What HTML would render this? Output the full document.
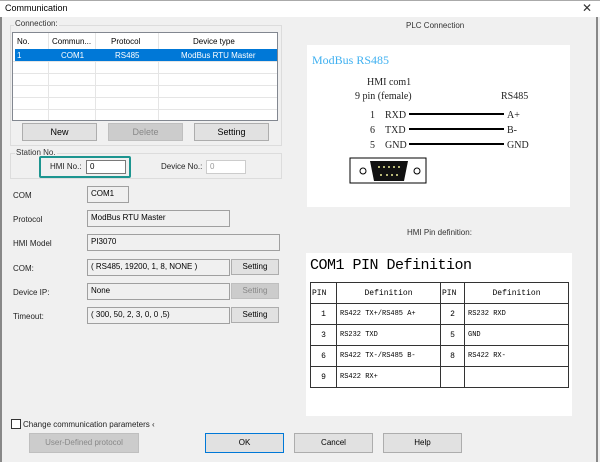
<!DOCTYPE html>
<html><head><meta charset="utf-8"><style>
*{margin:0;padding:0;box-sizing:border-box}
body{width:600px;height:462px;background:#f0f0f0;font-family:"Liberation Sans",sans-serif;font-size:8px;color:#000;position:relative;overflow:hidden}
.a{position:absolute}
.title{left:0;top:0;width:600px;height:17px;background:#fff;border-top:1px solid #aaa}
.btn{position:absolute;background:#e1e1e1;border:1px solid #adadad;text-align:center;font-size:8px}
.dis{background:#ccc;color:#888;border-color:#bfbfbf}
.fld{position:absolute;background:#f0f0f0;border:1px solid #a0a0a0;padding:2px 3px;font-size:8px;height:17px}
.lbl{position:absolute;font-size:8px;color:#222}
.grp{position:absolute;border:1px solid #dcdcdc}
.mono{font-family:"Liberation Mono",monospace}
table{border-collapse:collapse}
td{border:1px solid #333;font-family:"Liberation Mono",monospace;font-size:7px;padding:0 3px;height:21px}
</style></head><body>
<div class="a title"></div>
<div class="a" style="left:5px;top:3px;font-size:9px">Communication</div>
<div class="a" style="left:582px;top:1px;font-size:12px;color:#333">✕</div>
<div class="a" style="left:0;top:17px;width:2px;height:445px;background:#888"></div>
<div class="a" style="left:596px;top:17px;width:2px;height:445px;background:#888"></div>

<div class="grp" style="left:10px;top:25px;width:272px;height:121px"></div>
<div class="a" style="left:14px;top:19px;background:#f0f0f0;padding:0 1px;font-size:8px;color:#333">Connection:</div>
<div class="a" style="left:12px;top:32px;width:266px;height:89px;background:#fff;border:1px solid #828790"></div>
<svg class="a" style="left:13px;top:33px" width="264" height="87">
<g stroke="#e5e5e5" stroke-width="1"><line x1="35.5" y1="0" x2="35.5" y2="87"/><line x1="82.5" y1="0" x2="82.5" y2="87"/><line x1="145.5" y1="0" x2="145.5" y2="87"/>
<line x1="0" y1="28.5" x2="264" y2="28.5"/><line x1="0" y1="40.5" x2="264" y2="40.5"/><line x1="0" y1="52.5" x2="264" y2="52.5"/><line x1="0" y1="64.5" x2="264" y2="64.5"/><line x1="0" y1="76.5" x2="264" y2="76.5"/></g>
<rect x="2" y="16" width="262" height="12" fill="#0078d7"/>
<g font-family="Liberation Sans" font-size="8"><text x="4" y="11">No.</text><text x="39" y="11">Commun...</text><text x="98" y="11">Protocol</text><text x="180" y="11">Device type</text>
<g fill="#fff"><text x="4" y="25">1</text><text x="48" y="25">COM1</text><text x="102" y="25">RS485</text><text x="168" y="25">ModBus RTU Master</text></g></g></svg>
<div class="btn" style="left:22px;top:123px;width:75px;height:18px;line-height:16px;font-size:9px">New</div>
<div class="btn dis" style="left:108px;top:123px;width:75px;height:18px;line-height:16px;font-size:9px">Delete</div>
<div class="btn" style="left:194px;top:123px;width:75px;height:18px;line-height:16px;font-size:9px">Setting</div>

<div class="grp" style="left:10px;top:153px;width:272px;height:26px"></div>
<div class="a" style="left:15px;top:148px;background:#f0f0f0;padding:0 1px;color:#333">Station No.</div>
<div class="a" style="left:39px;top:156px;width:92px;height:22px;border:2px solid #1d9590;border-radius:2px"></div>
<div class="lbl" style="left:50px;top:162px">HMI No.:</div>
<div class="a" style="left:86px;top:160px;width:40px;height:14px;background:#fff;border:1px solid #7a7a7a;padding:1px 3px">0</div>
<div class="lbl" style="left:161px;top:162px">Device No.:</div>
<div class="a" style="left:206px;top:160px;width:40px;height:14px;background:#fff;border:1px solid #ccc;padding:1px 3px;color:#999">0</div>

<div class="lbl" style="left:13px;top:191px">COM</div><div class="fld" style="left:87px;top:186px;width:42px">COM1</div>
<div class="lbl" style="left:13px;top:215px">Protocol</div><div class="fld" style="left:87px;top:210px;width:143px">ModBus RTU Master</div>
<div class="lbl" style="left:13px;top:239px">HMI Model</div><div class="fld" style="left:87px;top:234px;width:193px">PI3070</div>
<div class="lbl" style="left:13px;top:264px">COM:</div><div class="fld" style="left:87px;top:259px;width:143px">( RS485, 19200, 1, 8, NONE )</div>
<div class="btn" style="left:231px;top:259px;width:48px;height:16px;line-height:14px">Setting</div>
<div class="lbl" style="left:13px;top:288px">Device IP:</div><div class="fld" style="left:87px;top:283px;width:143px">None</div>
<div class="btn dis" style="left:231px;top:283px;width:48px;height:16px;line-height:14px">Setting</div>
<div class="lbl" style="left:13px;top:312px">Timeout:</div><div class="fld" style="left:87px;top:307px;width:143px">( 300, 50, 2, 3, 0, 0 ,5)</div>
<div class="btn" style="left:231px;top:307px;width:48px;height:16px;line-height:14px">Setting</div>

<div class="lbl" style="left:406px;top:21px;color:#333">PLC Connection</div>
<div class="a" style="left:307px;top:45px;width:263px;height:162px;background:#fff"></div>
<svg class="a" style="left:307px;top:45px" width="263" height="162">
<text x="5" y="19" font-family="Liberation Serif" font-size="12" fill="#3fb0f0">ModBus RS485</text>
<g font-family="Liberation Serif" font-size="10" fill="#222">
<text x="60" y="40">HMI com1</text><text x="48" y="54">9 pin (female)</text><text x="194" y="54">RS485</text>
<text x="63" y="73">1</text><text x="78" y="73">RXD</text><text x="200" y="73">A+</text>
<text x="63" y="88">6</text><text x="78" y="88">TXD</text><text x="200" y="88">B-</text>
<text x="63" y="103">5</text><text x="78" y="103">GND</text><text x="200" y="103">GND</text></g>
<g stroke="#000" stroke-width="2"><line x1="102" y1="69" x2="197" y2="69"/><line x1="102" y1="84" x2="197" y2="84"/><line x1="102" y1="99" x2="197" y2="99"/></g>
<rect x="43" y="113" width="76" height="25" fill="#fff" stroke="#000"/>
<circle cx="56" cy="126" r="3" fill="none" stroke="#000"/><circle cx="110" cy="126" r="3" fill="none" stroke="#000"/>
<path d="M63 116 H101 L97 136 H67 Z" fill="#111"/>
<g fill="#ee9"><circle cx="72" cy="122" r="1"/><circle cx="77" cy="122" r="1"/><circle cx="82" cy="122" r="1"/><circle cx="87" cy="122" r="1"/><circle cx="92" cy="122" r="1"/><circle cx="74" cy="130" r="1"/><circle cx="80" cy="130" r="1"/><circle cx="85" cy="130" r="1"/><circle cx="90" cy="130" r="1"/></g>
</svg>

<div class="lbl" style="left:407px;top:228px;color:#333">HMI Pin definition:</div>
<div class="a" style="left:306px;top:253px;width:266px;height:163px;background:#fff"></div>
<div class="a mono" style="left:310px;top:257px;font-size:15px;letter-spacing:-0.5px">COM1 PIN Definition</div>
<table class="a" style="left:310px;top:282px;width:259px">
<tr><td style="width:26px;font-size:8px;padding:0 1px">PIN</td><td style="width:104px;text-align:center;font-size:8px">Definition</td><td style="width:24px;font-size:8px;padding:0 1px">PIN</td><td style="text-align:center;font-size:8px">Definition</td></tr>
<tr><td style="text-align:center;font-size:8px">1</td><td>RS422 TX+/RS485 A+</td><td style="text-align:center;font-size:8px">2</td><td>RS232 RXD</td></tr>
<tr><td style="text-align:center;font-size:8px">3</td><td>RS232 TXD</td><td style="text-align:center;font-size:8px">5</td><td>GND</td></tr>
<tr><td style="text-align:center;font-size:8px">6</td><td>RS422 TX-/RS485 B-</td><td style="text-align:center;font-size:8px">8</td><td>RS422 RX-</td></tr>
<tr><td style="text-align:center;font-size:8px">9</td><td>RS422 RX+</td><td></td><td></td></tr>
</table>

<div class="a" style="left:11px;top:419px;width:10px;height:10px;background:#fff;border:1px solid #333"></div>
<div class="lbl" style="left:23px;top:420px">Change communication parameters ‹</div>
<div class="btn dis" style="left:29px;top:433px;width:110px;height:20px;line-height:18px">User-Defined protocol</div>
<div class="btn" style="left:205px;top:433px;width:79px;height:20px;line-height:18px;border-color:#0078d7">OK</div>
<div class="btn" style="left:294px;top:433px;width:79px;height:20px;line-height:18px">Cancel</div>
<div class="btn" style="left:383px;top:433px;width:79px;height:20px;line-height:18px">Help</div>
</body></html>
